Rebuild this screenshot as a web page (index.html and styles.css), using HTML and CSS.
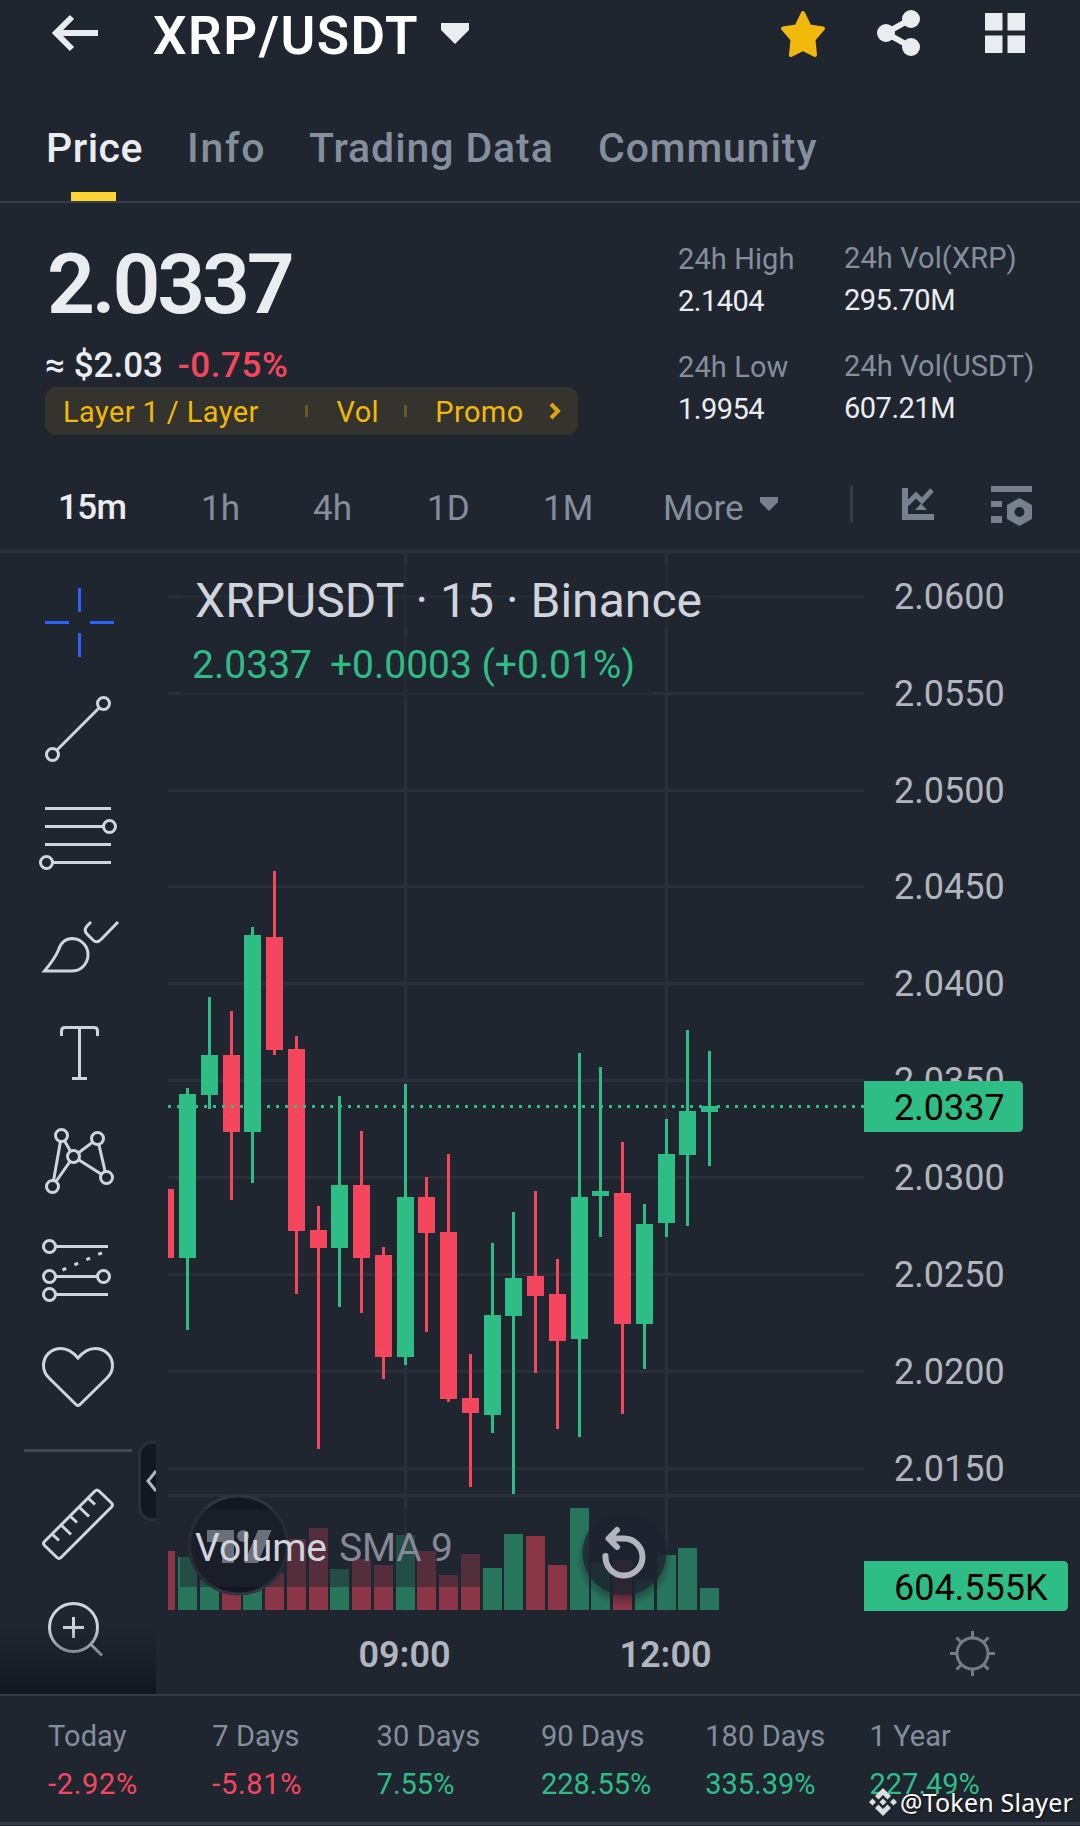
FILE: index.html
```html
<!DOCTYPE html>
<html lang="en">
<head>
    <meta charset="UTF-8">
    <meta name="viewport" content="width=device-width, initial-scale=1.0">
    <title>XRP/USDT</title>
    <link rel="stylesheet" href="styles.css">
</head>
<body>
    <div class="header">
        <svg class="back" width="46" height="66" viewBox="0 0 46 66"><path d="M46 33H5M20 17L4 33L20 49" fill="none" stroke="#eaecef" stroke-width="6"/></svg>
        <div class="pair">XRP/USDT</div>
        <svg class="caret" width="28" height="66" viewBox="0 0 28 66"><path d="M0 23H28V30L14 44L0 30Z" fill="#eaecef"/></svg>
        <div class="header-icons">
            <svg width="46" height="66" viewBox="0 0 46 66"><path d="M23 13L29.5 26.5L43 28.5L33.5 39.5L35 55L23 49L11 55L12.500 39.5L3 28.5L16.500 26.500Z" fill="#f0b90b" stroke="#f0b90b" stroke-width="4" stroke-linejoin="round"/></svg>
            <svg class="share" width="43" height="66" viewBox="0 0 43 66"><path d="M34 19L9 33L34 47" fill="none" stroke="#eaecef" stroke-width="6"/><circle cx="9" cy="33" r="9" fill="#eaecef"/><circle cx="34" cy="19" r="9" fill="#eaecef"/><circle cx="34" cy="47" r="9" fill="#eaecef"/></svg>
            <svg class="grid" width="40" height="66" viewBox="0 0 40 66"><path d="M0 13H17.500V30.500H0ZM22.500 13H40V30.500H22.500ZM0 35.500H17.500V53H0ZM22.500 35.500H40V53H22.500Z" fill="#eaecef"/></svg>
        </div>
    </div>

    <div class="tabs">
        <div class="tab active">Price</div>
        <div class="tab info">Info</div>
        <div class="tab">Trading Data</div>
        <div class="tab">Community</div>
    </div>

    <div class="summary">
        <div class="summary-left">
            <div class="price">2.0337</div>
            <div class="fiat">≈ $2.03 <span class="change">-0.75%</span></div>
            <div class="tags">
                <span class="tag-layer">Layer 1 / Layer</span>
                <i></i>
                <span class="tag-vol">Vol</span>
                <i></i>
                <span class="tag-promo">Promo</span>
                <svg width="14" height="18" viewBox="0 0 14 18"><path d="M3 2L10 9L3 16" fill="none" stroke="#d9a50f" stroke-width="4"/></svg>
            </div>
        </div>
        <div class="stats">
            <div class="stat">
                <div class="label">24h High</div>
                <div class="value">2.1404</div>
            </div>
            <div class="stat vol">
                <div class="label">24h Vol(XRP)</div>
                <div class="value">295.70M</div>
            </div>
            <div class="stat">
                <div class="label">24h Low</div>
                <div class="value">1.9954</div>
            </div>
            <div class="stat vol">
                <div class="label">24h Vol(USDT)</div>
                <div class="value">607.21M</div>
            </div>
        </div>
    </div>

    <div class="times">
        <div class="time active">15m</div>
        <div class="time">1h</div>
        <div class="time">4h</div>
        <div class="time">1D</div>
        <div class="time">1M</div>
        <div class="time more">More</div>
        <svg width="18" height="44" viewBox="0 0 18 44"><path d="M0 11H18V16L9 25L0 16Z" fill="#76808f"/></svg>
        <div class="bar"></div>
        <svg width="32" height="44" viewBox="0 0 32 44"><path d="M3 2V31H32" fill="none" stroke="#76808f" stroke-width="6"/><path d="M5 18L14 9L20 15L30 4" fill="none" stroke="#76808f" stroke-width="5"/><path d="M13 24L19 17.500L25 24Z" fill="#76808f"/></svg>
        <svg width="41" height="44" viewBox="0 0 41 44"><path d="M0 0H41V6H0ZM0 15H11V21H0ZM0 30H11V37H0Z" fill="#76808f"/><path fill-rule="evenodd" d="M28.500 12L41 19V33L28.500 40L16 33V19ZM28.500 21A5 5 0 1 0 28.500 31A5 5 0 1 0 28.500 21Z" fill="#76808f"/></svg>
    </div>

    <div class="trading">
        <div class="toolbar">
            <svg class="tool cross" viewBox="0 0 108 108"><path d="M21 54.500H45M66 54.500H90M55.500 20V44M55.500 65V89"/></svg>
            <svg class="tool" viewBox="0 0 108 108"><path d="M33 74L75 32"/><circle cx="28.500" cy="78.500" r="6"/><circle cx="79.500" cy="27.500" r="6"/></svg>
            <svg class="tool" viewBox="0 0 108 108"><path d="M21 24.500H87M21 42.500H79M21 60.500H87M29 78.500H87"/><circle cx="85.500" cy="42.500" r="6"/><circle cx="22.500" cy="78.500" r="6"/></svg>
            <svg class="tool" viewBox="0 0 108 108"><path d="M20.500 79C28 70 31.500 65 34.500 58C37 50 42 46.500 48.500 46.500A16.200 16.200 0 0 1 47 79Z"/><path d="M67 30L63 34C60.500 37 60.500 39.500 63 42L69 48C71.500 50.500 74.500 50 77 47.500L94 30"/></svg>
            <svg class="tool" viewBox="0 0 108 108"><path d="M37.500 36V31Q37.500 27.500 41 27.500H70Q73.500 27.500 73.500 31V36M55.500 27.500V78.500M48 78.500H63"/></svg>
            <svg class="tool" viewBox="0 0 108 108"><path d="M49.500 48.500L37.500 27.500L28.500 78.500L49.500 48.500L73.500 30.500L82.500 69.500Z"/><circle cx="37.500" cy="27.500" r="6"/><circle cx="73.500" cy="30.500" r="6"/><circle cx="49.500" cy="48.500" r="6"/><circle cx="28.500" cy="78.500" r="6"/><circle cx="82.500" cy="69.500" r="6"/></svg>
            <svg class="tool" viewBox="0 0 108 108"><path d="M32 30.500H84M32 60.500H74M32 78.500H84"/><path d="M38.500 54L80 36" stroke-dasharray="4 9"/><circle cx="25.500" cy="30.500" r="6"/><circle cx="25.500" cy="60.500" r="6"/><circle cx="79.500" cy="60.500" r="6"/><circle cx="25.500" cy="78.500" r="6"/></svg>
            <svg class="tool" viewBox="0 0 108 108"><path d="M54 34C48 27 43 24.500 37 24.500C27 24.500 19.500 32 19.500 41.500C19.500 47 21.500 50.500 25 54L52 80.500Q54 82.500 56 80.500L83 54C86.500 50.500 88.500 47 88.500 41.500C88.500 32 81 24.500 71 24.500C65 24.500 60 27 54 34Z"/></svg>
            <div class="divider"></div>
            <svg class="tool" viewBox="0 0 108 108"><path d="M71 21Q73 19 75 21L87.500 33Q89.500 35 87.500 37L37 87.500Q35 89.500 33 87.500L20.500 75.500Q18.500 73.500 20.500 71.500ZM28 64L35 70.500M37 55L47 64.500M46 46L53 52.500M55 37L65 46.500M64 28L71 34.500"/></svg>
            <svg class="tool" viewBox="0 0 108 108"><circle cx="49.500" cy="49.500" r="24"/><path d="M39 49.500H60M49.500 39V60M67 66.500L78 77.500"/></svg>
            <div class="fade"></div>
            <div class="collapse"><svg width="10" height="22" viewBox="0 0 10 22"><path d="M10 1L2 11L10 21" fill="none" stroke="#b2b5be" stroke-width="3"/></svg></div>
        </div>

        <svg class="chart" width="924" height="1141" viewBox="156 553 924 1141">
            <defs>
                <radialGradient id="shadow">
                    <stop offset="0.75" stop-color="#171b26" stop-opacity="0.5"/>
                    <stop offset="1" stop-color="#171b26" stop-opacity="0"/>
                </radialGradient>
            </defs>
            <g id="lines"></g>
            <g id="volume"></g>
            <g id="candles"></g>
            <path class="last" d="M168 1106.500H864"/>

            <circle cx="238.500" cy="1545" r="49" fill="#131722" stroke="#2f3440" stroke-width="3"/>
            <path d="M207 1530H234V1563H222V1542H207ZM258 1530H271.500L258 1563H244Z" fill="#b4b8c2"/>
            <circle cx="243" cy="1536" r="6" fill="#b4b8c2"/>

            <rect class="mask" x="180" y="563" width="540" height="66"/>
            <rect class="mask" x="180" y="635" width="473" height="62"/>
            <rect class="mask" x="180" y="1509" width="303" height="78"/>
            <text class="symbol" x="195" y="617" textLength="507">XRPUSDT · 15 · Binance</text>
            <text class="quote" x="192" y="678" textLength="120">2.0337</text>
            <text class="quote" x="330" y="678" textLength="305">+0.0003 (+0.01%)</text>
            <text class="study" x="195" y="1561" textLength="132">Volume</text>
            <text class="study gray" x="339" y="1561" textLength="114">SMA 9</text>

            <circle cx="624.500" cy="1558" r="48" fill="url(#shadow)"/>
            <circle cx="624.500" cy="1553" r="42" fill="#1f2430" fill-opacity="0.72"/>
            <path class="reset" d="M605.500 1556A18.500 18.500 0 1 0 624 1538.500H609M617 1530L608.500 1538.500L617 1547"/>

            <g id="labels"></g>
            <path d="M864 1081H1018Q1023 1081 1023 1086V1127Q1023 1132 1018 1132H864Z" fill="#2ebd85"/>
            <text class="on-tag" x="894" y="1120">2.0337</text>
            <path d="M864 1561H1063Q1068 1561 1068 1566V1606Q1068 1611 1063 1611H864Z" fill="#2ebd85"/>
            <text class="on-tag" x="894" y="1600">604.555K</text>
            <text class="clock" x="404.500" y="1667">09:00</text>
            <text class="clock" x="665.500" y="1667">12:00</text>
            <g class="sun">
                <circle cx="972.500" cy="1653.500" r="15.500"/>
                <path d="M972.500 1631V1638M972.500 1669V1676M950 1653.500H957M988 1653.500H995M956.500 1637.500L961.500 1642.500M983.500 1664.500L988.500 1669.500M988.500 1637.500L983.500 1642.500M961.500 1664.500L956.500 1669.500"/>
            </g>
        </svg>
    </div>

    <div class="performance">
        <div class="period"><div class="label">Today</div><div class="down">-2.92%</div></div>
        <div class="period"><div class="label">7 Days</div><div class="down">-5.81%</div></div>
        <div class="period"><div class="label">30 Days</div><div class="up">7.55%</div></div>
        <div class="period"><div class="label">90 Days</div><div class="up">228.55%</div></div>
        <div class="period"><div class="label">180 Days</div><div class="up">335.39%</div></div>
        <div class="period"><div class="label">1 Year</div><div class="up">227.49%</div></div>
        <div class="watermark">
            <svg width="28" height="28" viewBox="0 0 28 28"><path d="M14 0L22 8L18.500 11.500L14 7L9.500 11.500L6 8ZM14 28L22 20L18.500 16.500L14 21L9.500 16.500L6 20ZM14 10.500L17.500 14L14 17.500L10.500 14ZM3.500 10.500L7 14L3.500 17.500L0 14ZM24.500 10.500L28 14L24.500 17.500L21 14Z" fill="#dcdee1"/></svg>
            <span>@Token Slayer</span>
        </div>
    </div>

    <script>
        // x, high, body top, body bottom, low, volume top, up
        var candles = [
            [187.5, 1088, 1094, 1258, 1330, 1557, 1],
            [209.5, 997, 1055, 1095, 1109, 1580, 1],
            [231.5, 1011, 1055, 1132, 1200, 1585, 0],
            [252.5, 927, 935, 1132, 1183, 1572, 1],
            [274.5, 871, 937, 1050, 1055, 1573, 0],
            [296.5, 1036, 1049, 1231, 1294, 1539, 0],
            [318.5, 1206, 1230, 1248, 1449, 1528, 0],
            [339.5, 1096, 1185, 1248, 1307, 1569, 1],
            [361.5, 1131, 1185, 1258, 1313, 1559, 0],
            [383.5, 1247, 1255, 1357, 1379, 1565, 0],
            [405.5, 1084, 1197, 1357, 1365, 1535, 1],
            [426.5, 1177, 1197, 1233, 1332, 1551, 0],
            [448.5, 1154, 1232, 1399, 1402, 1575, 0],
            [470.5, 1354, 1398, 1413, 1487, 1554, 0],
            [492.5, 1243, 1315, 1415, 1433, 1568, 1],
            [513.5, 1212, 1278, 1316, 1494, 1534, 1],
            [535.5, 1191, 1276, 1296, 1373, 1536, 0],
            [557.5, 1259, 1294, 1341, 1429, 1565, 0],
            [579.5, 1053, 1197, 1339, 1437, 1508, 1],
            [600.5, 1067, 1191, 1196, 1237, 1563, 1],
            [622.5, 1142, 1193, 1324, 1414, 1560, 0],
            [644.5, 1204, 1224, 1324, 1369, 1580, 1],
            [666.5, 1119, 1154, 1223, 1237, 1555, 1],
            [687.5, 1030, 1111, 1155, 1226, 1548, 1],
            [709.5, 1051, 1106, 1112, 1166, 1588, 1]
        ];

        var rows = [596.5, 693.5, 790.5, 886.5, 983.5, 1080.5, 1177.5, 1274.5, 1371.5, 1468.5];
        var lines = '';
        var labels = '';
        rows.forEach(function(y, i) {
            lines += `<path d="M168 ${y}H864"/>`;
            labels += `<text x="894" y="${y + 12.5}">${(2.06 - i * 0.005).toFixed(4)}</text>`;
        });
        lines += '<path d="M405.5 553V1611M666.5 553V1611M168 1495.5H1080"/>';

        // the first candle is cut by the left edge
        var bodies = '<rect class="red" x="168" y="1189" width="6" height="69"/>';
        var bars = '<rect class="red" x="168" y="1551" width="7" height="59"/>';
        candles.forEach(function(c) {
            var color = c[6] ? 'green' : 'red';
            bodies += `<rect class="${color}" x="${c[0] - 1.5}" y="${c[1]}" width="3" height="${c[4] - c[1]}"/>`;
            bodies += `<rect class="${color}" x="${c[0] - 8.5}" y="${c[2]}" width="17" height="${c[3] - c[2]}"/>`;
            bars += `<rect class="${color}" x="${c[0] - 9.5}" y="${c[5]}" width="19" height="${1610 - c[5]}"/>`;
        });

        document.querySelector('#lines').innerHTML = lines;
        document.querySelector('#labels').innerHTML = labels;
        document.querySelector('#candles').innerHTML = bodies;
        document.querySelector('#volume').innerHTML = bars;
    </script>
</body>
</html>
```
FILE: styles.css
```css
* {
    box-sizing: border-box;
}

body , html {
    margin: 0;
    padding: 0;
}

body {
    width: 1080px;
    height: 1826px;
    overflow: hidden;
    background-color: #202630;
    color: #eaecef;
    font-family: Roboto, "Liberation Sans", sans-serif;
    white-space: nowrap;
}

svg {
    display: block;
    flex-shrink: 0;
}

.header {
    height: 72px;
    padding: 0 55px 0 52px;
    display: flex;
    align-items: flex-start;
}

.pair {
    width: 288px;
    margin-left: 55px;
    font-size: 53px;
    line-height: 72px;
    font-weight: 600;
    letter-spacing: 1.5px;
    color: #fff;
}

.header-icons {
    margin-left: auto;
    display: flex;
}

.share {
    margin-left: 51px;
}

.grid {
    margin-left: 65px;
}

.tabs {
    height: 131px;
    padding: 46px 0 0 46px;
    display: grid;
    grid-template-columns: 141px 122px 289px auto;
    border-bottom: 2px solid #373e4a;
}

.tab {
    font-size: 41px;
    line-height: 60px;
    font-weight: 500;
    letter-spacing: 0.9px;
    color: #848e9c;
}

.tab.active {
    position: relative;
    letter-spacing: 0.5px;
    color: #eaecef;
}

.tab.active::after {
    content: "";
    position: absolute;
    left: 25px;
    bottom: 0;
    width: 45px;
    height: 9px;
    background-color: #fcd535;
}

.tab.info {
    letter-spacing: 1.8px;
}

.summary {
    height: 232px;
    display: flex;
}

.summary-left {
    width: 678px;
    padding: 37px 0 0 45px;
}

.price {
    height: 90px;
    margin-bottom: 13px;
    padding-left: 2px;
    font-size: 84px;
    line-height: 90px;
    font-weight: 600;
    letter-spacing: -3.2px;
}

.fiat {
    height: 44px;
    font-size: 35px;
    line-height: 46px;
    font-weight: 500;
}

.change {
    margin-left: 6px;
    letter-spacing: 0.6px;
    color: #f6465d;
}

.tags {
    width: 533px;
    height: 48px;
    padding: 0 16px 0 18px;
    display: flex;
    align-items: center;
    border-radius: 11px;
    background-color: #35332d;
    color: #f0b90b;
    font-size: 29px;
    line-height: 36px;
    letter-spacing: 0.4px;
}

.tags span {
    padding-top: 2px;
}

.tags i {
    width: 3px;
    height: 12px;
    background-color: #6b581c;
}

.tag-layer {
    width: 243px;
}

.tag-vol {
    width: 96px;
    padding-left: 28px;
}

.tag-promo {
    width: 141px;
    padding-left: 28px;
}

.stats {
    padding-top: 35px;
    display: grid;
    grid-template-columns: 166px auto;
    grid-auto-rows: 84px;
    row-gap: 24px;
    font-size: 29px;
    line-height: 42px;
}

.vol {
    margin-top: -1px;
}

.label {
    color: #848e9c;
    letter-spacing: 0.1px;
}

.value {
    letter-spacing: -0.5px;
}

.times {
    height: 118px;
    padding: 51px 0 0 58px;
    display: grid;
    grid-template-columns: 143px 112px 114px 116px 120px 97px 90px 52px 89px auto;
    border-bottom: 4px solid #2a303b;
    font-size: 35px;
    line-height: 46px;
    color: #848e9c;
}

.time.active {
    line-height: 44px;
    letter-spacing: -0.7px;
    color: #eaecef;
    font-weight: 500;
}

.bar {
    width: 3px;
    height: 36px;
    background-color: #373d49;
}

.trading {
    height: 1141px;
    display: flex;
}

.toolbar {
    position: relative;
    width: 156px;
    padding: 15px 24px 0;
}

.tool {
    width: 108px;
    height: 108px;
    stroke: #d1d4dc;
    stroke-width: 3;
    fill: none;
}

.tool circle {
    fill: #202630;
}

.cross {
    stroke: #2962ff;
}

.divider {
    height: 3px;
    margin: 17px 0 18px;
    background-color: #434852;
}

.fade {
    position: absolute;
    left: 0;
    bottom: 0;
    width: 156px;
    height: 69px;
    background: linear-gradient(rgba(19, 23, 34, 0), #131722);
}

.collapse {
    position: absolute;
    right: 0;
    top: 888px;
    width: 18px;
    height: 80px;
    padding: 26px 0 0 5px;
    border: 3px solid #2a2e39;
    border-right: none;
    border-radius: 14px 0 0 14px;
    background-color: #131722;
}

#lines path {
    stroke: #2a303b;
    stroke-width: 3;
}

#candles .green {
    fill: #2ebd85;
}

#candles .red {
    fill: #f6465d;
}

#volume .green {
    fill: #27755b;
}

#volume .red {
    fill: #8b3646;
}

.last {
    stroke: #2ebd85;
    stroke-width: 3;
    stroke-dasharray: 3 6;
}

.mask {
    fill: #202630;
    fill-opacity: 0.5;
}

.symbol {
    font-size: 48px;
    fill: #d1d4dc;
}

.quote {
    font-size: 39px;
    fill: #2ebd85;
}

.study {
    font-size: 39px;
    fill: #d1d4dc;
}

.gray {
    fill: #868993;
}

.reset {
    fill: none;
    stroke: #b2b5be;
    stroke-width: 6;
    stroke-linecap: round;
    stroke-linejoin: round;
}

#labels text {
    font-size: 36px;
    fill: #b2b5be;
}

.on-tag {
    font-size: 36px;
    fill: #000;
}

.clock {
    font-size: 36px;
    font-weight: 600;
    text-anchor: middle;
    fill: #b2b5be;
}

.sun {
    fill: none;
    stroke: #787b86;
    stroke-width: 3;
}

.performance {
    position: relative;
    height: 131px;
    padding: 20px 0 0 48px;
    display: grid;
    grid-template-columns: repeat(6, 164.3px);
    border-top: 2px solid #333a45;
    border-bottom: 3px solid #333a45;
    font-size: 29px;
    line-height: 40px;
}

.period .label {
    margin-bottom: 8px;
}

.up {
    color: #2ebd85;
}

.down {
    letter-spacing: 0.7px;
    color: #f6465d;
}

/* sits over the last value */
.watermark {
    position: absolute;
    left: 869px;
    bottom: 3px;
    display: flex;
    align-items: center;
    gap: 3px;
    font-family: "Noto Sans", sans-serif;
    font-size: 25px;
    line-height: 34px;
    letter-spacing: 0.2px;
    color: #fff;
    text-shadow: 1px 1px 2px rgba(0, 0, 0, 0.6);
}
```
